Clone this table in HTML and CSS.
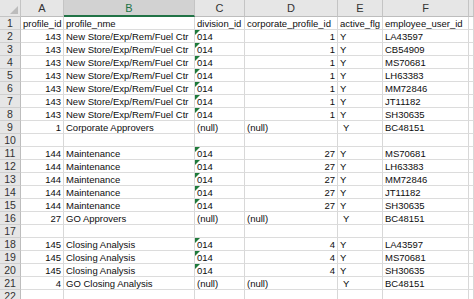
FILE: index.html
```html
<!DOCTYPE html>
<html>
<head>
<meta charset="utf-8">
<link rel="stylesheet" href="styles.css">
</head>
<body>
<div class="sheet">
  <div class="row head">
    <div class="corner"><span class="tri"></span></div>
    <div class="ch">A</div><div class="ch sel">B</div><div class="ch">C</div><div class="ch">D</div><div class="ch">E</div><div class="ch">F</div><div class="ch"></div>
  </div>
  <div class="row"><div class="rh">1</div><div class="c">profile_id</div><div class="c">profile_nme</div><div class="c">division_id</div><div class="c">corporate_profile_id</div><div class="c">active_flg</div><div class="c">employee_user_id</div><div class="c"></div></div>
  <div class="row"><div class="rh">2</div><div class="c n">143</div><div class="c">New Store/Exp/Rem/Fuel Ctr</div><div class="c t">014</div><div class="c n">1</div><div class="c">Y</div><div class="c">LA43597</div><div class="c"></div></div>
  <div class="row"><div class="rh">3</div><div class="c n">143</div><div class="c">New Store/Exp/Rem/Fuel Ctr</div><div class="c t">014</div><div class="c n">1</div><div class="c">Y</div><div class="c">CB54909</div><div class="c"></div></div>
  <div class="row"><div class="rh">4</div><div class="c n">143</div><div class="c">New Store/Exp/Rem/Fuel Ctr</div><div class="c t">014</div><div class="c n">1</div><div class="c">Y</div><div class="c">MS70681</div><div class="c"></div></div>
  <div class="row"><div class="rh">5</div><div class="c n">143</div><div class="c">New Store/Exp/Rem/Fuel Ctr</div><div class="c t">014</div><div class="c n">1</div><div class="c">Y</div><div class="c">LH63383</div><div class="c"></div></div>
  <div class="row"><div class="rh">6</div><div class="c n">143</div><div class="c">New Store/Exp/Rem/Fuel Ctr</div><div class="c t">014</div><div class="c n">1</div><div class="c">Y</div><div class="c">MM72846</div><div class="c"></div></div>
  <div class="row"><div class="rh">7</div><div class="c n">143</div><div class="c">New Store/Exp/Rem/Fuel Ctr</div><div class="c t">014</div><div class="c n">1</div><div class="c">Y</div><div class="c">JT11182</div><div class="c"></div></div>
  <div class="row"><div class="rh">8</div><div class="c n">143</div><div class="c">New Store/Exp/Rem/Fuel Ctr</div><div class="c t">014</div><div class="c n">1</div><div class="c">Y</div><div class="c">SH30635</div><div class="c"></div></div>
  <div class="row"><div class="rh">9</div><div class="c n">1</div><div class="c">Corporate Approvers</div><div class="c">(null)</div><div class="c">(null)</div><div class="c sp">Y</div><div class="c">BC48151</div><div class="c"></div></div>
  <div class="row"><div class="rh">10</div><div class="c"></div><div class="c"></div><div class="c"></div><div class="c"></div><div class="c"></div><div class="c"></div><div class="c"></div></div>
  <div class="row"><div class="rh">11</div><div class="c n">144</div><div class="c">Maintenance</div><div class="c t">014</div><div class="c n">27</div><div class="c">Y</div><div class="c">MS70681</div><div class="c"></div></div>
  <div class="row"><div class="rh">12</div><div class="c n">144</div><div class="c">Maintenance</div><div class="c t">014</div><div class="c n">27</div><div class="c">Y</div><div class="c">LH63383</div><div class="c"></div></div>
  <div class="row"><div class="rh">13</div><div class="c n">144</div><div class="c">Maintenance</div><div class="c t">014</div><div class="c n">27</div><div class="c">Y</div><div class="c">MM72846</div><div class="c"></div></div>
  <div class="row"><div class="rh">14</div><div class="c n">144</div><div class="c">Maintenance</div><div class="c t">014</div><div class="c n">27</div><div class="c">Y</div><div class="c">JT11182</div><div class="c"></div></div>
  <div class="row"><div class="rh">15</div><div class="c n">144</div><div class="c">Maintenance</div><div class="c t">014</div><div class="c n">27</div><div class="c">Y</div><div class="c">SH30635</div><div class="c"></div></div>
  <div class="row"><div class="rh">16</div><div class="c n">27</div><div class="c">GO Approvers</div><div class="c">(null)</div><div class="c">(null)</div><div class="c sp">Y</div><div class="c">BC48151</div><div class="c"></div></div>
  <div class="row"><div class="rh">17</div><div class="c"></div><div class="c"></div><div class="c"></div><div class="c"></div><div class="c"></div><div class="c"></div><div class="c"></div></div>
  <div class="row"><div class="rh">18</div><div class="c n">145</div><div class="c">Closing Analysis</div><div class="c t">014</div><div class="c n">4</div><div class="c">Y</div><div class="c">LA43597</div><div class="c"></div></div>
  <div class="row"><div class="rh">19</div><div class="c n">145</div><div class="c">Closing Analysis</div><div class="c t">014</div><div class="c n">4</div><div class="c">Y</div><div class="c">MS70681</div><div class="c"></div></div>
  <div class="row"><div class="rh">20</div><div class="c n">145</div><div class="c">Closing Analysis</div><div class="c t">014</div><div class="c n">4</div><div class="c">Y</div><div class="c">SH30635</div><div class="c"></div></div>
  <div class="row"><div class="rh">21</div><div class="c n">4</div><div class="c">GO Closing Analysis</div><div class="c">(null)</div><div class="c">(null)</div><div class="c sp">Y</div><div class="c">BC48151</div><div class="c"></div></div>
  <div class="row"><div class="rh">22</div><div class="c"></div><div class="c"></div><div class="c"></div><div class="c"></div><div class="c"></div><div class="c"></div><div class="c"></div></div>
</div>
</body>
</html>
```
FILE: styles.css
```css
html, body {
  margin: 0;
  padding: 0;
  background: #ffffff;
}
body {
  font-family: "Liberation Sans", Arial, sans-serif;
  font-size: 9.5px;
  color: #111;
  overflow: hidden;
}
.sheet {
  display: flex;
  flex-direction: column;
  width: 474px;
}
.row {
  display: grid;
  grid-template-columns: 21px 43px 131px 50px 93px 45px 86px 1fr;
  height: 13px;
}
.row.head {
  height: 17px;
}
.row > div {
  box-sizing: border-box;
  overflow: hidden;
  white-space: nowrap;
}
.corner {
  background: #e6e6e6;
  border-right: 1px solid #c4c4c4;
  border-bottom: 1px solid #c4c4c4;
  position: relative;
}
.tri {
  position: absolute;
  right: 2px;
  bottom: 2px;
  width: 0;
  height: 0;
  border-left: 8px solid transparent;
  border-bottom: 8px solid #bcbcbc;
}
.ch {
  background: #e6e6e6;
  border-right: 1px solid #c4c4c4;
  border-bottom: 1px solid #bdbdbd;
  text-align: center;
  font-size: 11px;
  line-height: 16px;
  color: #333;
}
.ch.sel {
  background: #d2d2d2;
  color: #217346;
  border-bottom: 2px solid #217346;
}
.rh {
  background: #e6e6e6;
  border-right: 1px solid #bdbdbd;
  border-bottom: 1px solid #cfcfcf;
  text-align: center;
  font-size: 10.5px;
  line-height: 12px;
  color: #333;
}
.c {
  border-right: 1px solid #d8d8d8;
  border-bottom: 1px solid #dcdcdc;
  line-height: 13px;
  padding: 0 2px;
  position: relative;
  color: #0d0d0d;
}
.c.n {
  text-align: right;
}
.c.sp {
  padding-left: 5px;
}
.c.t::before {
  content: "";
  position: absolute;
  left: 0;
  top: 0;
  width: 0;
  height: 0;
  border-top: 5px solid #1f7a3a;
  border-right: 5px solid transparent;
}
```
